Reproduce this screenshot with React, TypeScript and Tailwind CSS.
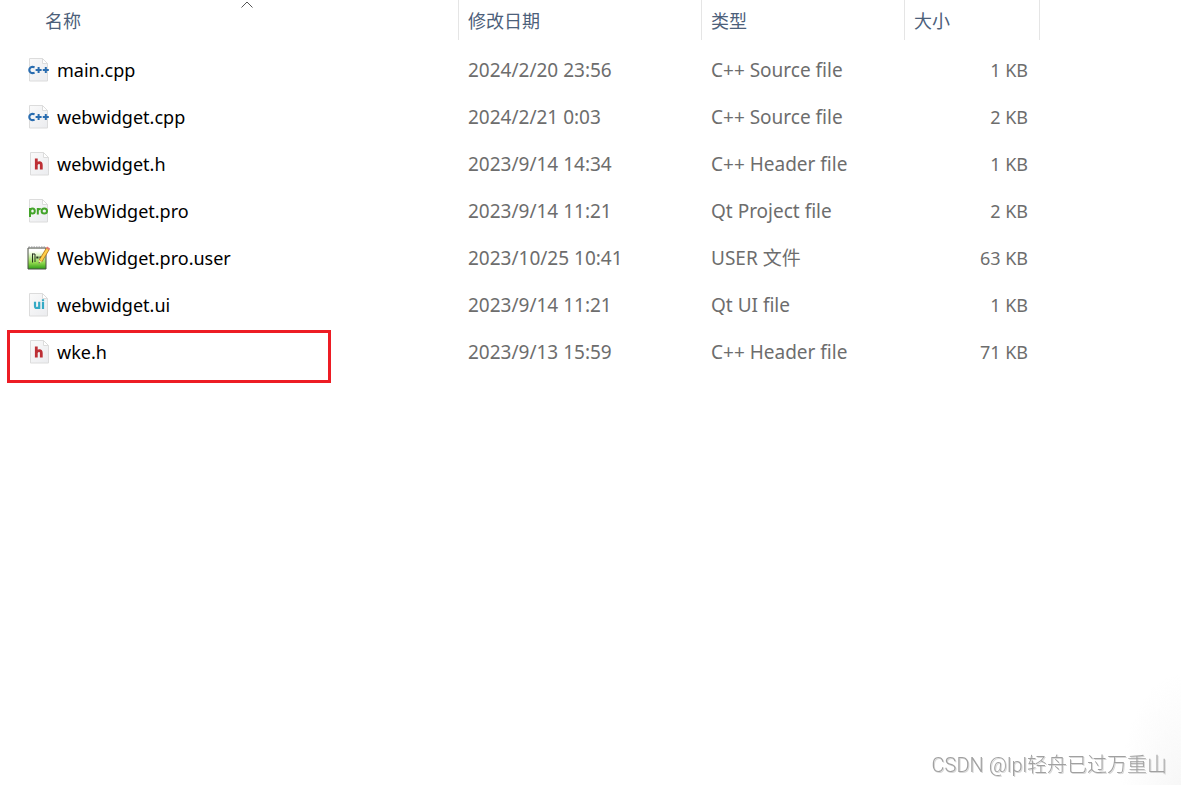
import React from 'react';
import { clsx } from 'clsx';

type FileKind = 'cpp' | 'header' | 'pro' | 'user' | 'ui';

interface FileEntry {
  name: string;
  modified: string;
  type: string;
  size: string;
  kind: FileKind;
  marked?: boolean;
}

const files: FileEntry[] = [
  { name: 'main.cpp', modified: '2024/2/20 23:56', type: 'C++ Source file', size: '1 KB', kind: 'cpp' },
  { name: 'webwidget.cpp', modified: '2024/2/21 0:03', type: 'C++ Source file', size: '2 KB', kind: 'cpp' },
  { name: 'webwidget.h', modified: '2023/9/14 14:34', type: 'C++ Header file', size: '1 KB', kind: 'header' },
  { name: 'WebWidget.pro', modified: '2023/9/14 11:21', type: 'Qt Project file', size: '2 KB', kind: 'pro' },
  { name: 'WebWidget.pro.user', modified: '2023/10/25 10:41', type: 'USER 文件', size: '63 KB', kind: 'user' },
  { name: 'webwidget.ui', modified: '2023/9/14 11:21', type: 'Qt UI file', size: '1 KB', kind: 'ui' },
  { name: 'wke.h', modified: '2023/9/13 15:59', type: 'C++ Header file', size: '71 KB', kind: 'header', marked: true },
];

const columns = [
  { label: '修改日期', width: 'w-[243px]' },
  { label: '类型', width: 'w-[203px]' },
  { label: '大小', width: 'w-[136px]' },
];

// Sheet of paper with a folded corner
function Page({ x }: { x: number }) {
  return (
    <g transform={`translate(${x} 0)`}>
      <path d="M.5.5h13l5 5v17.500H.5z" fill="url(#paper)" stroke="#dcdcdc" />
      <path d="M13.500.500v5h5z" fill="#fff" stroke="#dcdcdc" strokeLinejoin="round" />
    </g>
  );
}

function FileIcon({ kind }: { kind: FileKind }) {
  return (
    <svg width="24" height="24" viewBox="0 0 24 24" className="shrink-0 overflow-visible" aria-hidden="true">
      {kind === 'cpp' && (
        <>
          <Page x={2} />
          <path d="M7.600 9.300C4.300 8.300 2.300 9.600 2.300 12s2 3.700 5.300 2.700" fill="none" stroke="#2a6db0" strokeWidth="2.200" />
          <path d="M8.600 12h6M11.600 9v6M15.800 12h6M18.800 9v6" stroke="#2a6db0" strokeWidth="2" />
        </>
      )}
      {kind === 'header' && (
        <>
          <Page x={3} />
          <path d="M9.300 6.500v11M9.300 12.500c1.400-2.600 5-2.600 5 .6v4.400" fill="none" stroke="#bd2f35" strokeWidth="2.800" />
        </>
      )}
      {kind === 'pro' && (
        <>
          <Page x={2} />
          <g fill="none" stroke="#43a42a" strokeWidth="2">
            <path d="M3 9v9" />
            <ellipse cx="5.500" cy="12" rx="2.300" ry="2.600" />
            <path d="M10.800 15.500V9M10.800 12q0-2.300 2.900-2" />
            <ellipse cx="17.300" cy="12" rx="2.700" ry="2.600" />
          </g>
        </>
      )}
      {kind === 'user' && (
        <>
          <path d="M1 2h18v21H1z" fill="url(#grass)" stroke="#4a4f47" />
          <path d="M1.500 1.500h17" stroke="#999" strokeWidth="2" strokeDasharray="1.500 1" />
          <path d="M2 3h16v2.500H2z" fill="#fff" />
          <path d="M5.500 7.500v9M5.500 8h2.500v8" fill="none" stroke="#26331f" />
          <path d="M9.300 11.500h2.200M12.500 11.500h2.200" stroke="#26331f" strokeWidth="1.800" />
          <path d="M21 2.500 13.500 15" stroke="#b87a24" strokeWidth="4" />
          <path d="M20.800 2.800 13.700 14.600" stroke="#ffd049" strokeWidth="2.400" />
          <path d="m19.500 1.300 3 2" stroke="#e0776e" strokeWidth="2" />
          <path d="m12 14-.3 3.500 3.200-1.700z" fill="#f4d8a2" />
          <path d="m11.700 17.500.1-1.500 1.300.8z" fill="#333" />
        </>
      )}
      {kind === 'ui' && (
        <>
          <Page x={2} />
          <path d="M8 8.800v4.400q0 2.700 3.600 1.300M12.200 8.800v7.200" fill="none" stroke="#35aac5" strokeWidth="2.200" />
          <path d="M16 6.300v1.700M16 8.800v7.200" stroke="#35aac5" strokeWidth="2.200" />
        </>
      )}
    </svg>
  );
}

function Watermark() {
  return (
    <div className="pointer-events-none fixed right-0 bottom-0 flex h-28 w-64 items-end justify-end bg-[radial-gradient(60px_110px_at_bottom_right,#f7f7f7,#ffffff00)] pr-3.5 pb-1.5">
      <p className="font-[Roboto,'Noto_Sans_CJK_SC',sans-serif] text-[20px] leading-7 font-light whitespace-nowrap text-[#a0a0a0] [text-shadow:1px_1px_0_#8b8b8b55]">
        CSDN @lpl轻舟已过万重山
      </p>
    </div>
  );
}

export default function App() {
  return (
    <main className="min-h-screen overflow-x-auto bg-white font-['Noto_Sans','Noto_Sans_CJK_SC',sans-serif] text-[18px] leading-6 text-[#6d6d6d]">
      <svg width="0" height="0" className="absolute" aria-hidden="true">
        <defs>
          <linearGradient id="paper" x1="0" y1="0" x2="1" y2="1">
            <stop offset="0" stopColor="#fafafa" />
            <stop offset="1" stopColor="#ebecef" />
          </linearGradient>
          <linearGradient id="grass" x1="0" y1="0" x2="0" y2="1">
            <stop offset="0.2" stopColor="#f8fff0" />
            <stop offset="0.7" stopColor="#91d94e" />
            <stop offset="1" stopColor="#2f9d16" />
          </linearGradient>
        </defs>
      </svg>

      <table className="w-full min-w-[1040px] table-fixed border-collapse">
        <thead>
          <tr className="h-[46px] text-left align-top text-[#4c607a]">
            <th className="w-[458px] p-0 font-normal" aria-sort="ascending">
              <button type="button" className="relative ml-9 flex h-10 w-[422px] items-center pt-0.5 pl-[9px]">
                名称
                <svg width="12" height="7" viewBox="0 0 12 7" className="absolute top-px left-1/2 -translate-x-1/2" aria-hidden="true">
                  <path d="M.5 6.500 6 1l5.500 5.500" fill="none" stroke="#555" />
                </svg>
              </button>
            </th>
            {columns.map((column, index) => (
              <th key={column.label} className={clsx(column.width, 'p-0 font-normal')}>
                <button
                  type="button"
                  className={clsx(
                    'flex h-10 w-full items-center border-l border-[#e5e5e5] pt-0.5 pl-[9px]',
                    index === columns.length - 1 && 'border-r'
                  )}
                >
                  {column.label}
                </button>
              </th>
            ))}
            <td />
          </tr>
        </thead>
        <tbody>
          {files.map(file => (
            <tr key={file.name} className="h-[47px]">
              <td className="relative p-0">
                <div className="flex items-center gap-1.5 pl-[27px] text-black">
                  <FileIcon kind={file.kind} />
                  <span>{file.name}</span>
                </div>
                {file.marked && (
                  <div className="absolute top-0.5 left-[7px] h-[53px] w-[324px] border-3 border-[#ed1c24]" />
                )}
              </td>
              <td className="p-0 pl-2.5 text-[19px]">{file.modified}</td>
              <td className="p-0 pl-2.5 text-[19px]">{file.type}</td>
              <td className="p-0 pr-3 text-right">{file.size}</td>
              <td />
            </tr>
          ))}
        </tbody>
      </table>

      <Watermark />
    </main>
  );
}
